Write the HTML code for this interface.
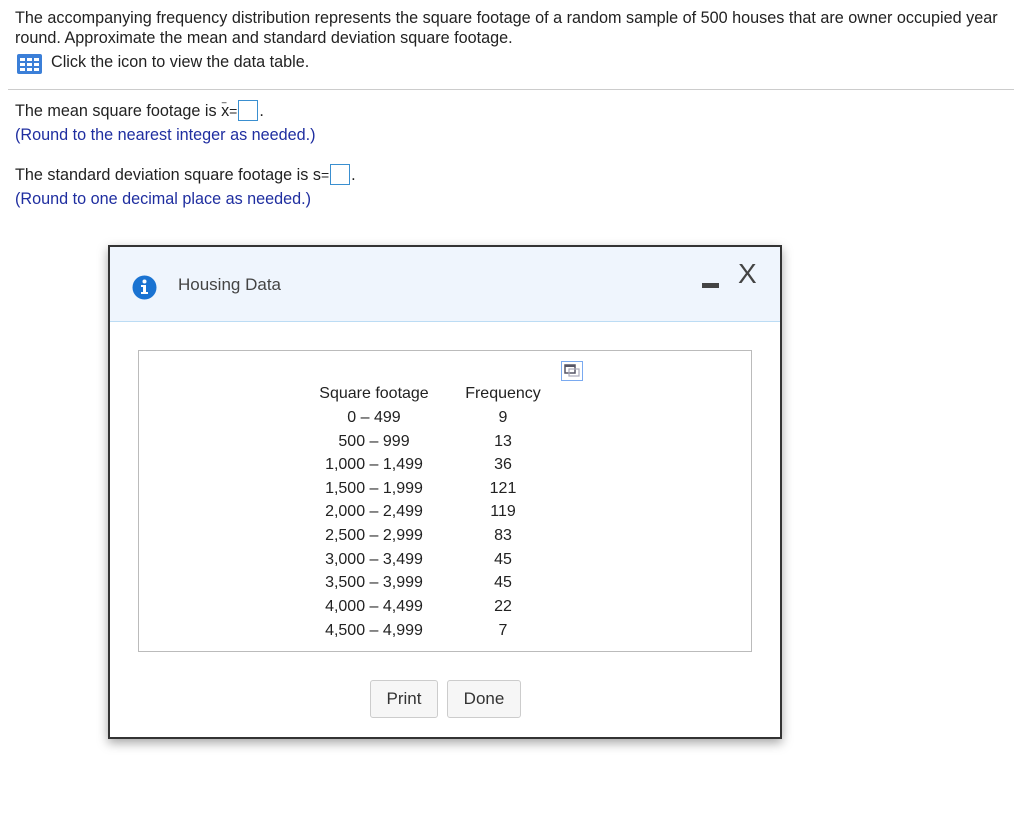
<!DOCTYPE html>
<html><head><meta charset="utf-8"><style>
body{margin:0;width:1024px;height:813px;background:#fff;font-family:"Liberation Sans",Arial,sans-serif;color:#222;position:relative;overflow:hidden}
.a{position:absolute;white-space:nowrap}
.t{font-size:16.2px;line-height:20px}
.blue{color:#1f2ea0}
.box{display:inline-block;width:20px;height:21px;border:1px solid #3a8fd0;vertical-align:-5px;box-sizing:border-box;margin:0 1px}
.dlg{position:absolute;left:108px;top:245px;width:674px;height:494px;border:2px solid #333;box-sizing:border-box;box-shadow:0 4px 10px rgba(0,0,0,.35);background:#fff}
.hdr{position:absolute;left:0;top:0;right:0;height:74px;background:#eff5fd;border-bottom:1px solid #bcdcf4}
.inner{position:absolute;left:28px;top:103px;width:614px;height:302px;border:1px solid #bbb;box-sizing:border-box}
.c1{position:absolute;left:165px;width:140px;text-align:center;font-size:16px}
.c2{position:absolute;left:317px;width:94px;text-align:center;font-size:16px}
.btn{position:absolute;top:433px;height:38px;border:1px solid #ccc;border-radius:3px;background:#f6f6f6;box-sizing:border-box;font-size:17px;line-height:36px;text-align:center;color:#333}
</style></head><body>
<div class="a t" style="left:15px;top:8px">The accompanying frequency distribution represents the square footage of a random sample of 500 houses that are owner occupied year</div>
<div class="a t" style="left:15px;top:28px">round. Approximate the mean and standard deviation square footage.</div>
<svg class="a" style="left:17px;top:54px" width="25" height="20" viewBox="0 0 25 20"><rect x="0" y="0" width="25" height="20" rx="2" fill="#3b7fd8"/><g fill="#fff"><rect x="3" y="4" width="5" height="3"/><rect x="10" y="4" width="5" height="3"/><rect x="17" y="4" width="5" height="3"/><rect x="3" y="9" width="5" height="3"/><rect x="10" y="9" width="5" height="3"/><rect x="17" y="9" width="5" height="3"/><rect x="3" y="14" width="5" height="3"/><rect x="10" y="14" width="5" height="3"/><rect x="17" y="14" width="5" height="3"/></g></svg>
<div class="a t" style="left:51px;top:52px">Click the icon to view the data table.</div>
<div class="a" style="left:8px;top:89px;width:1006px;height:1px;background:#ccc"></div>
<div class="a t" style="left:15px;top:100px">The mean square footage is <span style="position:relative">x<span style="position:absolute;left:1px;top:-4px;font-size:12px">‾</span></span><span style="font-size:14px">=</span><span class="box"></span>.</div>
<div class="a t blue" style="left:15px;top:125px">(Round to the nearest integer as needed.)</div>
<div class="a t" style="left:15px;top:164px">The standard deviation square footage is s<span style="font-size:14px">=</span><span class="box"></span>.</div>
<div class="a t blue" style="left:15px;top:189px">(Round to one decimal place as needed.)</div>
<div class="dlg">
 <div class="hdr">
  <svg class="a" style="left:22px;top:28px" width="25" height="25" viewBox="0 0 25 25"><circle cx="12.5" cy="12.5" r="12" fill="#1a73d2"/><circle cx="12.5" cy="6.5" r="2" fill="#fff"/><path d="M9 10h5v7h2v2H9v-2h2v-5H9z" fill="#fff"/></svg>
  <div class="a" style="left:68px;top:28px;font-size:17px;color:#444">Housing Data</div>
  <div class="a" style="left:592px;top:36px;width:17px;height:5px;background:#444"></div>
  <div class="a" style="left:628px;top:11px;font-size:28px;color:#444">X</div>
 </div>
 <div class="inner">
  <svg class="a" style="left:422px;top:10px" width="22" height="20" viewBox="0 0 22 20"><rect x="0.5" y="0.5" width="21" height="19" fill="#fff" stroke="#7aaaf0"/><rect x="4" y="4" width="10" height="8" fill="none" stroke="#556" stroke-width="1.5"/><rect x="4" y="4" width="10" height="2" fill="#556"/><rect x="8" y="8" width="10" height="7" fill="none" stroke="#aab" stroke-width="1.2"/></svg>
  <div class="c1" style="top:34px">Square footage</div><div class="c2" style="top:34px">Frequency</div>
  <div class="c1" style="top:58px">0 – 499</div><div class="c2" style="top:58px">9</div>
  <div class="c1" style="top:82px">500 – 999</div><div class="c2" style="top:82px">13</div>
  <div class="c1" style="top:105px">1,000 – 1,499</div><div class="c2" style="top:105px">36</div>
  <div class="c1" style="top:129px">1,500 – 1,999</div><div class="c2" style="top:129px">121</div>
  <div class="c1" style="top:152px">2,000 – 2,499</div><div class="c2" style="top:152px">119</div>
  <div class="c1" style="top:176px">2,500 – 2,999</div><div class="c2" style="top:176px">83</div>
  <div class="c1" style="top:200px">3,000 – 3,499</div><div class="c2" style="top:200px">45</div>
  <div class="c1" style="top:223px">3,500 – 3,999</div><div class="c2" style="top:223px">45</div>
  <div class="c1" style="top:247px">4,000 – 4,499</div><div class="c2" style="top:247px">22</div>
  <div class="c1" style="top:271px">4,500 – 4,999</div><div class="c2" style="top:271px">7</div>
 </div>
 <div class="btn" style="left:260px;width:68px">Print</div>
 <div class="btn" style="left:337px;width:74px">Done</div>
</div>
</body></html>
